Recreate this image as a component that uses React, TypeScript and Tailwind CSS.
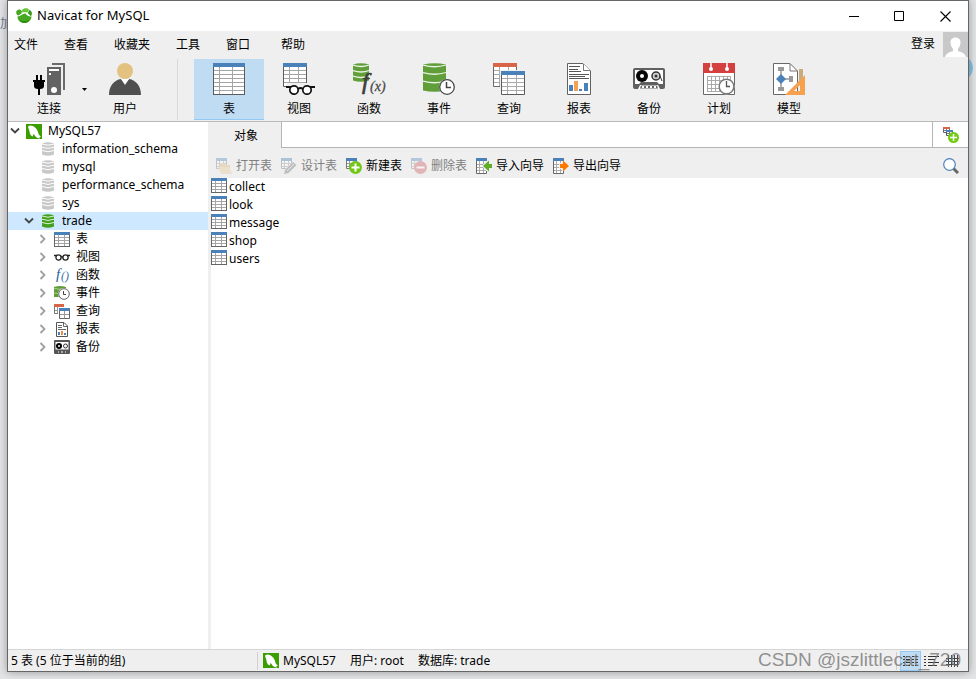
import type { ReactNode } from "react";
import clsx from "clsx";

type IconProps = { className?: string };

function Svg({ w, h = w, children, className }: { w: number; h?: number; children: ReactNode; className?: string }) {
  return (
    <svg width={w} height={h} viewBox={`0 0 ${w} ${h}`} fill="none" aria-hidden="true" className={clsx("shrink-0", className)}>
      {children}
    </svg>
  );
}

/* ---------- logos ---------- */

function NavicatLogo() {
  return (
    <Svg w={16}>
      <path d="M.2 4C.5 1 4.500 .5 6 3L5.500 5.500L2.500 7.500C.8 7 0 5.500 .2 4Z" fill="#48a822" />
      <path d="M6 2C7.500-.3 12-.3 13 1.500L11.500 4.500C9.500 4 8 4 6.300 4.500Z" fill="#6cc63c" />
      <path d="M13.200 2C16.800 3 16.500 7.500 14.500 8L11.800 5Z" fill="#3a9a1a" />
      <path d="M1.500 8.500C5 8.500 6 5.500 9.500 5.500C11 7.500 13 9 15.500 8.500C15.500 12 12.500 15 8.500 15C4.500 15 1.500 12.500 1.500 8.500Z" fill="#46a820" />
      <path d="M3.500 12C6 13.500 11.500 13.500 14 11.500C12.500 14 10.500 15 8.500 15C6.500 15 4.500 14 3.500 12Z" fill="#2f8c12" />
    </Svg>
  );
}

function MySqlLogo() {
  return (
    <Svg w={16} h={15}>
      <path d="M0 0H16V15H0Z" fill="#3c9d00" />
      <path d="M2 2.500L4 1.500C8 1.500 11.500 5 12.300 9L12.800 10.500L15 13L13.300 13L14 14.500C11.500 14.500 9.500 13 8.500 11L7.500 10L6.800 12.500L5 11.500C3 9 4 7 2.500 4.500Z" fill="#fff" />
    </Svg>
  );
}

/* ---------- large icons ---------- */

function ConnectionIcon() {
  return (
    <Svg w={32}>
      <path d="M19 0H32V27H30V2H19Z" fill="#6b6b6b" />
      <path d="M14 4H28V32H14Z" fill="#636363" />
      <path d="M16 6H26V8H16ZM16 10H18V12H16Z" fill="#fff" />
      <circle cx="21" cy="27" r="3" fill="#fff" />
      <path d="M3 12H5V17H7V12H9V17H12V19H11V23Q11 26 7 26V32H5V26Q1 26 1 23V19H0V17H3Z" fill="#000" />
    </Svg>
  );
}

function UserIcon() {
  return (
    <Svg w={32}>
      <circle cx="16" cy="8" r="8" fill="#e3c281" />
      <path d="M0 32C0 23 5 17 12 16L16 22L20 16C27 17 32 23 32 32Z" fill="#505050" />
      <path d="M12 16H20L16 21Z" fill="#fff" />
    </Svg>
  );
}

function TableIcon() {
  return (
    <Svg w={32}>
      <path d="M0 0H32V32H0Z" fill="#5b5b5b" />
      <path d="M1 4H31V31H1Z" fill="#fff" />
      <path d="M0 0H32V4H0Z" fill="#4a81b9" />
      <path d="M6.500 4V31M19.500 4V31M1 7.500H31M1 11.500H31M1 15.500H31M1 19.500H31M1 23.500H31M1 27.500H31" stroke="#a5a5a5" />
    </Svg>
  );
}

function ViewIcon() {
  return (
    <Svg w={32}>
      <path d="M0 3H24V20H5L2 24H0Z" fill="#fff" />
      <path d="M.5 3V23.500H3M23.500 3V20" stroke="#5b5b5b" />
      <path d="M0 0H24V4H0Z" fill="#4a81b9" />
      <path d="M6.500 4V20M15.500 4V20M1 7.500H23M1 11.500H23M1 15.500H23M1 19.500H23" stroke="#a5a5a5" />
      <path d="M3 21H11L15 22H20L24 21H32V23H29L28 26L24 31H21L17 27L14 30H9L5 26Z" fill="#efefef" />
      <circle cx="11" cy="27" r="4.200" fill="#fff" stroke="#111" strokeWidth="1.700" />
      <circle cx="24" cy="27" r="4.200" fill="#fff" stroke="#111" strokeWidth="1.700" />
      <path d="M3 24H8M27 24H32M15 26Q17.500 24 20 26" stroke="#111" strokeWidth="2" />
    </Svg>
  );
}

function FunctionIcon() {
  return (
    <Svg w={36} h={32} className="-mr-1">
      <path d="M0 1.500Q8-1 16 1.500V17.500Q8 20 0 17.500Z" fill="#5f9e39" />
      <path d="M0 2Q8 5 16 2M0 7.500Q8 10.500 16 7.500M0 13Q8 16 16 13" stroke="#e9f2e4" strokeWidth="1.300" />
      <text x="9" y="26" fill="#3d3d3d" stroke="#3d3d3d" strokeWidth=".7" fontSize="24" fontStyle="italic" className="font-['Liberation_Serif',serif]">f</text>
      <text x="17" y="28" fill="#4a4a4a" stroke="#4a4a4a" strokeWidth=".3" fontSize="14" fontStyle="italic" className="font-['Liberation_Serif',serif]">(x)</text>
    </Svg>
  );
}

function EventIcon() {
  return (
    <Svg w={32}>
      <path d="M0 1.500Q12-1 23 1.500V27.500Q12 30 0 27.500Z" fill="#5f9e39" />
      <path d="M0 2Q12 5.500 23 2M0 9.500Q12 13 23 9.500M0 18Q12 21.500 23 18" stroke="#e9f2e4" strokeWidth="1.300" />
      <circle cx="24" cy="24" r="8" fill="#efefef" />
      <circle cx="24" cy="24" r="7.300" fill="#fff" stroke="#484848" strokeWidth="1.300" />
      <path d="M23.500 19V24.500H28" stroke="#444" strokeWidth="1.500" />
    </Svg>
  );
}

function QueryIcon() {
  return (
    <Svg w={32}>
      <path d="M.5 .5H23.500V23.500H.5Z" fill="#fff" stroke="#686868" />
      <path d="M6.500 4V23M15.500 4V23M1 7.500H23M1 11.500H23M1 15.500H23M1 19.500H23" stroke="#aaa" />
      <path d="M0 0H24V4H0Z" fill="#d96548" />
      <path d="M7 7H32V32H7Z" fill="#efefef" />
      <path d="M8.500 8.500H31.500V31.500H8.500Z" fill="#fff" stroke="#5b5b5b" />
      <path d="M14.500 12V31M23.500 12V31M9 15.500H31M9 19.500H31M9 23.500H31M9 27.500H31" stroke="#aaa" />
      <path d="M8 8H32V12H8Z" fill="#4a81b9" />
    </Svg>
  );
}

function ReportIcon() {
  return (
    <Svg w={24} h={32}>
      <path d="M.5 .5H16L23.500 8V31.500H.5Z" fill="#fff" stroke="#626262" />
      <path d="M16.500 1V7.500H23" fill="#fff" stroke="#777" />
      <path d="M2 3.500H13M2 6.500H11M2 8.500H14M2 11.500H22M2 13.500H18M2 15.500H22" stroke="#555" />
      <path d="M2 22H6V28H2ZM12 26H15V28H12ZM17 20H21V28H17Z" fill="#4a81b9" />
      <path d="M7 18H11V28H7Z" fill="#f6a052" />
    </Svg>
  );
}

function BackupIcon() {
  return (
    <Svg w={32} h={22}>
      <rect width="32" height="21" rx="2" fill="#606060" />
      <path d="M2 2H30V16H26L24 14H8L6 16H2Z" fill="#fff" />
      <circle cx="9" cy="8" r="6" fill="#080808" />
      <circle cx="9" cy="8" r="2" fill="#fff" />
      <circle cx="23" cy="8" r="4" fill="#d0d0d0" stroke="#333" strokeWidth="1.500" />
      <circle cx="23" cy="8" r="1.500" fill="#333" />
      <path d="M27 8L29 13" stroke="#333" />
      <path d="M7 17H25L27 21H5Z" fill="#fff" />
      <path d="M8 17.500H24L25 20.500H7Z" fill="#666" />
      <path d="M9 19H11M13 19H15M17 19H19M21 19H23" stroke="#fff" strokeWidth="2" />
    </Svg>
  );
}

function ScheduleIcon() {
  return (
    <Svg w={32}>
      <path d="M.5 4V31.500H31.500V4" fill="#fff" stroke="#686868" />
      <path d="M0 0H32V10H0Z" fill="#d43f3f" />
      <path d="M8 0V6M24 0V6" stroke="#fff" strokeWidth="1.500" />
      <circle cx="8" cy="6" r="2" fill="#fff" />
      <circle cx="24" cy="6" r="2" fill="#fff" />
      <path d="M4.500 13V29M8.500 13V29M12.500 13V29M16.500 13V29M20.500 13V29M24.500 13V29M27.500 13V29M4 13.500H28M4 17.500H28M4 21.500H28M4 25.500H28M4 28.500H28" stroke="#aaa" />
      <circle cx="23.500" cy="23.500" r="8" fill="#fff" />
      <circle cx="23.500" cy="23.500" r="7.300" fill="#fff" stroke="#777" strokeWidth="1.400" />
      <path d="M23.500 18V23.500H27" stroke="#555" strokeWidth="1.300" />
    </Svg>
  );
}

function ModelIcon() {
  return (
    <Svg w={32}>
      <path d="M.5 .5H17L24.500 8V31.500H.5Z" fill="#fff" stroke="#686868" />
      <path d="M17 1V8H24" stroke="#777" />
      <path d="M8 6V25M8 16H18" stroke="#999" strokeWidth="1.500" />
      <path d="M5 4H11V8H5ZM5 24H11V28H5ZM16 13H20V19H16Z" fill="#999" />
      <path d="M8 11L13 16L8 21L3 16Z" fill="#4a81b9" />
      <path d="M26 6H30V20L26 22Z" fill="#c9ac7c" />
      <path fillRule="evenodd" d="M12 32L32 12V32ZM21 28H27V22Z" fill="#f7a14e" />
    </Svg>
  );
}

/* ---------- small icons ---------- */

function SmallTable({ className }: IconProps) {
  return (
    <Svg w={16} className={className}>
      <path d="M0 1H16V16H0Z" fill="#656565" />
      <path d="M1 4H15V15H1Z" fill="#fff" />
      <path d="M0 1H16V4H0Z" fill="#4a81b9" />
      <path d="M4.500 4V15M10.500 4V15M1 6.500H15M1 9.500H15M1 12.500H15" stroke="#a5a5a5" />
    </Svg>
  );
}

function MiniGrid() {
  return (
    <>
      <path d="M.5 .5H10.500V10.500H.5Z" fill="#fff" stroke="#777" />
      <path d="M3.500 3V10M7.500 3V10M1 5.500H10M1 8.500H10" stroke="#999" />
      <path d="M0 0H11V3H0Z" fill="#4a81b9" />
    </>
  );
}

function SmallDatabase({ on }: { on?: boolean }) {
  const fill = on ? "#43a020" : "#c8c8c8";
  const line = on ? "#dcf2d1" : "#fff";
  return (
    <Svg w={12} h={14}>
      <path d="M0 1.500Q6-1 12 1.500V12.500Q6 15 0 12.500Z" fill={fill} />
      <path d="M0 2Q6 4.500 12 2M0 5.200Q6 7.700 12 5.200M0 8.500Q6 11 12 8.500" stroke={line} />
    </Svg>
  );
}

function SmallGlasses() {
  return (
    <Svg w={16}>
      <circle cx="4.500" cy="8.500" r="2.600" stroke="#222" strokeWidth="1.300" />
      <circle cx="11.500" cy="8.500" r="2.600" stroke="#222" strokeWidth="1.300" />
      <path d="M0 6.500H3M13 6.500H16M7 8H9" stroke="#222" strokeWidth="1.500" />
    </Svg>
  );
}

function SmallFunction() {
  return (
    <Svg w={16}>
      <text x="2" y="12" fill="#255f99" fontSize="15" fontStyle="italic" className="font-['Liberation_Serif',serif]">f</text>
      <text x="7" y="13" fill="#3a72ad" fontSize="12" fontStyle="italic" className="font-['Liberation_Serif',serif]">()</text>
    </Svg>
  );
}

function SmallEvent() {
  return (
    <Svg w={16}>
      <path d="M0 2Q6 0 12 2V12H0Z" fill="#5f9e39" />
      <path d="M0 3.500Q6 5 12 3.500M0 8Q4 9 8 8" stroke="#a9d08e" />
      <circle cx="10" cy="9" r="6" fill="#fff" />
      <circle cx="10" cy="9" r="5.300" fill="#fff" stroke="#666" />
      <path d="M9.500 6V9.500H12" stroke="#444" />
    </Svg>
  );
}

function SmallQuery() {
  return (
    <Svg w={16}>
      <path d="M.5 1.500H9.500V10.500H.5Z" fill="#fff" stroke="#777" />
      <path d="M3.500 4V10M1 7.500H5" stroke="#999" />
      <path d="M0 1H10V4H0Z" fill="#d96548" />
      <path d="M4 4H16V16H4Z" fill="#fff" />
      <path d="M5.500 5.500H15.500V15.500H5.500Z" fill="#fff" stroke="#666" />
      <path d="M10.500 8V15M6 11.500H15" stroke="#999" />
      <path d="M5 5H16V8H5Z" fill="#4a81b9" />
    </Svg>
  );
}

function SmallReport() {
  return (
    <Svg w={16}>
      <path d="M2.500 1.500H10L13.500 5V15.500H2.500Z" fill="#fff" stroke="#555" />
      <path d="M9.500 2V5.500H13M4 4.500H8M4 6.500H8M4 8.500H12" stroke="#666" />
      <path d="M4 11H6V14H4ZM10 12H12V14H10Z" fill="#4a81b9" />
      <path d="M7 10H9V14H7Z" fill="#ef8b3a" />
    </Svg>
  );
}

function SmallBackup() {
  return (
    <Svg w={16}>
      <rect y="1" width="16" height="14" rx="1" fill="#555" />
      <path d="M1.500 3H14.500V10.500H1.500Z" fill="#fff" />
      <circle cx="5" cy="7" r="3" fill="#000" />
      <circle cx="5" cy="7" r="1" fill="#fff" />
      <circle cx="11.500" cy="7" r="2" stroke="#333" />
      <path d="M4 13H5M7 13H9M11 13H12" stroke="#fff" />
    </Svg>
  );
}

function OpenTableIcon() {
  return (
    <Svg w={16} className="opacity-35">
      <MiniGrid />
      <path d="M4 5H8L10 7H14V10H4Z" fill="#d4b26e" />
      <path d="M2 9H13L16 16H5Z" fill="#e3c58b" />
    </Svg>
  );
}

function DesignTableIcon() {
  return (
    <Svg w={16} className="opacity-40">
      <MiniGrid />
      <path d="M3 16L4 11.500L12 3.500L16 7L7.500 15Z" fill="#efefef" />
      <path d="M3 16L4 12L12 4L15.500 7L7.500 15Z" fill="#777" />
      <path d="M6 13L13 6" stroke="#ddd" />
    </Svg>
  );
}

function NewTableIcon() {
  return (
    <Svg w={16}>
      <MiniGrid />
      <circle cx="9.500" cy="9.500" r="6.500" fill="#72c716" />
      <path d="M9.500 5.500V13.500M5.500 9.500H13.500" stroke="#fff" strokeWidth="2" />
    </Svg>
  );
}

function DeleteTableIcon() {
  return (
    <Svg w={16} className="opacity-35">
      <MiniGrid />
      <circle cx="9.500" cy="9.500" r="6.500" fill="#c84b50" />
      <path d="M5.500 9.500H13.500" stroke="#fff" strokeWidth="2" />
    </Svg>
  );
}

function TransferIcon({ out }: { out?: boolean }) {
  return (
    <Svg w={16}>
      <path d="M.5 .5H10.500V15.500H.5Z" fill="#fff" stroke="#686868" />
      <path d="M3.500 3V15M7.500 3V15M1 6.500H10M1 9.500H10M1 12.500H10" stroke="#aaa" />
      <path d="M0 0H11V3H0Z" fill="#4a81b9" />
      {out ? (
        <>
          <path d="M6 5H9V3H12V13H9V11H6Z" fill="#efefef" />
          <path d="M7 6H10V2.500L16 8L10 13.500V10H7Z" fill="#ff7900" />
        </>
      ) : (
        <>
          <path d="M10 3H12V13H10L6 8Z" fill="#efefef" />
          <path d="M16 6H13V2.500L7 8L13 13.500V10H16Z" fill="#61ad27" />
        </>
      )}
    </Svg>
  );
}

function AddObjectIcon() {
  return (
    <Svg w={16}>
      <path d="M.5 .5H6.500V5.500H.5Z" fill="#fff" stroke="#666" />
      <path d="M3.500 2V6M1 3.500H6" stroke="#777" />
      <path d="M0 0H7V2H0Z" fill="#d96548" />
      <path d="M3.500 3.500H9.500V8.500H3.500Z" fill="#fff" stroke="#555" />
      <path d="M6.500 5V9M4 6.500H9" stroke="#777" />
      <path d="M3 3H10V5H3Z" fill="#4a81b9" />
      <circle cx="10.500" cy="10.500" r="5.500" fill="#72cc10" />
      <path d="M10.500 7V14M7 10.500H14" stroke="#fff" strokeWidth="1.500" />
    </Svg>
  );
}

function SearchIcon() {
  return (
    <Svg w={16}>
      <path d="M10 10L15 15" stroke="#666" strokeWidth="3" />
      <circle cx="6.500" cy="6.500" r="5.800" fill="#fff" stroke="#4d82b8" strokeWidth="1.200" />
    </Svg>
  );
}

function Chevron({ open }: { open?: boolean }) {
  return (
    <Svg w={10}>
      <path d={open ? "M1 2.500L5 6.500L9 2.500" : "M2.500 1L6.500 5L2.500 9"} stroke={open ? "#444" : "#a0a0a0"} strokeWidth={1.8} />
    </Svg>
  );
}

/* ---------- data ---------- */

const menus = ["文件", "查看", "收藏夹", "工具", "窗口", "帮助"];

const tools = [
  { label: "表", icon: <TableIcon /> },
  { label: "视图", icon: <ViewIcon /> },
  { label: "函数", icon: <FunctionIcon /> },
  { label: "事件", icon: <EventIcon /> },
  { label: "查询", icon: <QueryIcon /> },
  { label: "报表", icon: <ReportIcon /> },
  { label: "备份", icon: <BackupIcon /> },
  { label: "计划", icon: <ScheduleIcon /> },
  { label: "模型", icon: <ModelIcon /> },
];

const databases = ["information_schema", "mysql", "performance_schema", "sys"];

const groups = [
  { label: "表", icon: <SmallTable /> },
  { label: "视图", icon: <SmallGlasses /> },
  { label: "函数", icon: <SmallFunction /> },
  { label: "事件", icon: <SmallEvent /> },
  { label: "查询", icon: <SmallQuery /> },
  { label: "报表", icon: <SmallReport /> },
  { label: "备份", icon: <SmallBackup /> },
];

const actions = [
  { label: "打开表", icon: <OpenTableIcon />, disabled: true },
  { label: "设计表", icon: <DesignTableIcon />, disabled: true },
  { label: "新建表", icon: <NewTableIcon /> },
  { label: "删除表", icon: <DeleteTableIcon />, disabled: true },
  { label: "导入向导", icon: <TransferIcon /> },
  { label: "导出向导", icon: <TransferIcon out /> },
];

const tables = ["collect", "look", "message", "shop", "users"];

/* ---------- parts ---------- */

function ToolButton({ label, icon, active }: { label: string; icon: ReactNode; active?: boolean }) {
  return (
    <button
      type="button"
      aria-pressed={active}
      className={clsx(
        "flex w-[70px] shrink-0 flex-col items-center border-b pt-1 pb-px",
        active ? "border-[#90c8f6] bg-[#c0dcf3]" : "border-transparent"
      )}
    >
      <span className="flex h-8 items-center">{icon}</span>
      <span className="mt-[5px] leading-[18px]">{label}</span>
    </button>
  );
}

function TitleBar() {
  return (
    <header className="flex h-[30px] items-center bg-white pl-2">
      <NavicatLogo />
      <h1 className="ml-[5px] flex-1 text-[13px]">Navicat for MySQL</h1>
      <button type="button" aria-label="Minimize" className="flex h-full w-[46px] items-center justify-center">
        <Svg w={11}><path d="M0 5.500H10" stroke="#000" /></Svg>
      </button>
      <button type="button" aria-label="Maximize" className="flex h-full w-[45px] items-center justify-center">
        <Svg w={11}><path d="M.5 .5H9.500V9.500H.5Z" stroke="#000" /></Svg>
      </button>
      <button type="button" aria-label="Close" className="flex h-full w-[46px] items-center justify-center">
        <Svg w={11}><path d="M.5 .5L10.500 10.500M10.500 .5L.5 10.500" stroke="#000" strokeWidth="1.100" /></Svg>
      </button>
    </header>
  );
}

function MenuBar() {
  return (
    <nav className="flex h-[26px] items-center">
      <div className="flex flex-1 items-center gap-[26px] pt-[2px] pl-[6px]">
        {menus.map((menu) => (
          <button key={menu} type="button" className="last:ml-[5px]">{menu}</button>
        ))}
      </div>
      <button type="button" className="mr-2">登录</button>
      <Svg w={25}>
        <path d="M0 0H25V25H0Z" fill="#c8c8c8" />
        <path d="M7.500 10C7.500 4 17.500 4 17.500 10C17.500 13 16.500 15 15 17V19C18 20 22 21 23 25H2C3 21 7 20 10 19V17C8.500 15 7.500 13 7.500 10Z" fill="#fff" />
      </Svg>
    </nav>
  );
}

function ToolBar() {
  return (
    <div className="flex border-b border-[#bababa] pt-[2px] pb-px">
      <div className="flex pl-[6px]">
        <ToolButton label="连接" icon={<ConnectionIcon />} />
        <button type="button" aria-label="连接选项" className="mr-[2px] -ml-[2px] flex w-[6px] items-center">
          <Svg w={5} h={3}><path d="M0 0H5L2.500 3Z" fill="#000" /></Svg>
        </button>
        <ToolButton label="用户" icon={<UserIcon />} />
      </div>
      <div className="mr-4 ml-[17px] w-px bg-[#d9d9d9]" />
      {tools.map((tool, i) => (
        <ToolButton key={tool.label} {...tool} active={i === 0} />
      ))}
    </div>
  );
}

function Sidebar() {
  return (
    <aside className="w-[200px] shrink-0 bg-white">
      <ul>
        <li className="flex h-[18px] items-center pl-[2px]">
          <Chevron open />
          <span className="ml-[6px]"><MySqlLogo /></span>
          <span className="ml-[6px]">MySQL57</span>
        </li>
        {databases.map((name) => (
          <li key={name} className="flex h-[18px] items-center gap-2 pl-[34px]">
            <SmallDatabase />
            {name}
          </li>
        ))}
        <li className="flex h-[18px] items-center bg-[#cde8ff] pl-4">
          <Chevron open />
          <span className="mr-2 ml-2"><SmallDatabase on /></span>
          trade
        </li>
        {groups.map((group) => (
          <li key={group.label} className="flex h-[18px] items-center pl-[30px]">
            <Chevron />
            <span className="mr-[6px] ml-[6px]">{group.icon}</span>
            {group.label}
          </li>
        ))}
      </ul>
    </aside>
  );
}

function ObjectPane() {
  return (
    <main className="flex min-w-0 flex-1 flex-col bg-white">
      <div className="flex h-[26px] bg-[#efefef]">
        <button type="button" role="tab" aria-selected="true" className="w-[70px] shrink-0 pt-[2px]">对象</button>
        <div className="flex-1 border-b border-l border-[#b5b5b5] bg-white" />
        <button type="button" aria-label="添加" className="flex w-9 shrink-0 items-center justify-center border-b border-l border-[#b5b5b5] bg-white">
          <AddObjectIcon />
        </button>
      </div>
      <div className="flex h-[30px] items-center gap-[9px] bg-[#efefef] pt-[6px] pr-[9px] pl-[5px]">
        {actions.map((action) => (
          <button
            key={action.label}
            type="button"
            disabled={action.disabled}
            className={clsx("flex shrink-0 items-center gap-1", action.disabled && "text-[#808080]")}
          >
            {action.icon}
            {action.label}
          </button>
        ))}
        <button type="button" aria-label="搜索" className="ml-auto"><SearchIcon /></button>
      </div>
      <ul>
        {tables.map((name) => (
          <li key={name} className="flex h-[18px] items-center gap-[2px]">
            <SmallTable className="mb-1" />
            {name}
          </li>
        ))}
      </ul>
    </main>
  );
}

function StatusBar() {
  return (
    <footer className="relative flex h-[22px] items-center border-t border-[#d5d5d5] pl-[3px]">
      <span className="w-[246px]">5 表 (5 位于当前的组)</span>
      <span className="mr-[5px] h-[18px] w-px bg-[#d0d0d0]" />
      <MySqlLogo />
      <span className="ml-1">MySQL57</span>
      <span className="ml-[14px]">用户: root</span>
      <span className="ml-[14px]">数据库: trade</span>
      <div className="ml-auto flex items-center pr-[5px]">
        <span className="mr-[3px] h-[18px] w-px bg-[#d0d0d0]" />
        <button type="button" aria-label="列表" className="flex h-5 w-[21px] items-center justify-center border border-[#91c9f7] bg-[#c0dcf3]">
          <Svg w={15} h={12}><path d="M0 1.500H2M3 1.500H7M9 1.500H11M12 1.500H15M0 4.500H2M3 4.500H7M9 4.500H11M12 4.500H15M0 7.500H2M3 7.500H7M9 7.500H11M12 7.500H15M0 10.500H2M3 10.500H7M9 10.500H11M12 10.500H15" stroke="#333" /></Svg>
        </button>
        <button type="button" aria-label="详细信息" className="flex h-5 w-[21px] items-center justify-center">
          <Svg w={15} h={12}><path d="M0 1.500H2M4 1.500H15M0 4.500H2M4 4.500H11M0 7.500H2M4 7.500H15M0 10.500H2M4 10.500H13" stroke="#333" /></Svg>
        </button>
        <button type="button" aria-label="ER 图表" className="flex h-5 w-[21px] items-center justify-center">
          <Svg w={15} h={12}><path d="M1 3.500H14M1 6.500H14M1 9.500H14M3.500 0V12M6.500 0V12M9.500 0V12M12.500 0V12" stroke="#444" /></Svg>
        </button>
      </div>
      <span className="pointer-events-none absolute right-[7px] bottom-0 font-['Liberation_Sans',sans-serif] text-[19px] leading-[23px] text-[#777]/80">
        CSDN @jszlittlecat_720
      </span>
    </footer>
  );
}

export default function App() {
  return (
    <div className="relative flex min-h-screen flex-col bg-[#e3e4e6] px-[7px] pb-[7px] font-['Noto_Sans','Noto_Sans_CJK_SC',sans-serif] text-xs text-black">
      <span className="absolute top-4 left-0 text-[#6b7896]" aria-hidden="true">加</span>
      <span className="absolute top-14 right-[3px] size-6 rounded-full bg-[#8cc4e4]" />
      <div className="relative flex flex-1 flex-col border border-[#666] bg-[#efefef] shadow-[0_0_8px_rgba(0,0,0,0.35)]">
        <TitleBar />
        <MenuBar />
        <ToolBar />
        <div className="flex flex-1">
          <Sidebar />
          <div className="w-[3px] bg-[#efefef]" />
          <ObjectPane />
        </div>
        <StatusBar />
      </div>
    </div>
  );
}
